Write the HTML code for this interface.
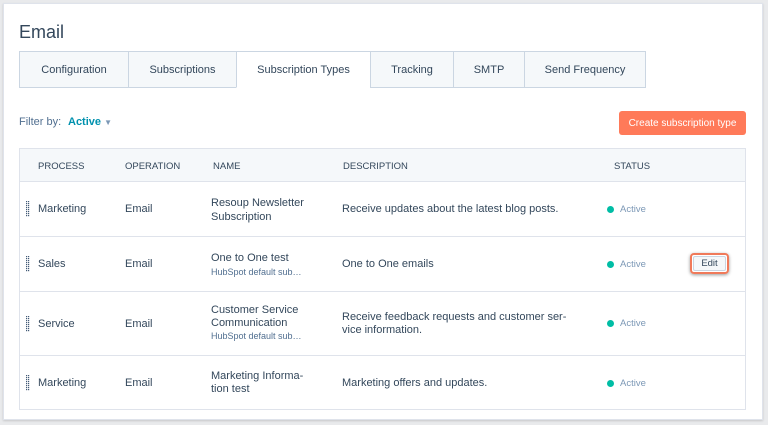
<!DOCTYPE html>
<html><head><style>
*{margin:0;padding:0;box-sizing:border-box}
body{width:768px;height:425px;background:#e9eaec;font-family:"Liberation Sans",sans-serif;color:#33475b;position:relative;overflow:hidden}
.card{position:absolute;left:3px;top:3px;width:760px;height:417px;background:#fff;border:1px solid #dfe3eb;box-shadow:0 1px 2px rgba(0,0,0,.15)}
.abs{position:absolute}
h1{position:absolute;left:19px;top:22px;font-size:18px;font-weight:normal;color:#33475b}
.tab{position:absolute;top:51px;height:37px;background:#f5f8fa;border:1px solid #cbd6e2;font-size:11px;line-height:36px;text-align:center;color:#33475b}
.tab.act{background:#fff;border-bottom-color:#fff}
.t{position:absolute;font-size:11px;color:#33475b}
.btn{position:absolute;left:619px;top:111px;width:127px;height:24px;background:#ff7a59;border-radius:3px;color:#fff;font-size:10px;display:flex;align-items:center;justify-content:center}
.table{position:absolute;left:19px;top:148px;width:727px;height:262px;border:1px solid #dfe3eb}
.hd{position:absolute;left:0;top:0;width:725px;height:33px;background:#f5f8fa;border-bottom:1px solid #dfe3eb}
.row{position:absolute;left:0;width:725px;border-bottom:1px solid #dfe3eb}
.th{position:absolute;top:12px;font-size:9.5px;color:#33475b}
.grip{position:absolute;left:6px}
.dot{position:absolute;width:7px;height:7px;border-radius:50%;background:#00bda5}
.st{position:absolute;font-size:9.5px;color:#7c98b6}
.sub{font-size:9px;color:#516f90}
</style></head><body>
<div class="card"></div>
<h1>Email</h1>
<div class="tab" style="left:19px;width:110px">Configuration</div>
<div class="tab" style="left:128px;width:109px">Subscriptions</div>
<div class="tab act" style="left:236px;width:135px">Subscription Types</div>
<div class="tab" style="left:370px;width:84px">Tracking</div>
<div class="tab" style="left:453px;width:72px">SMTP</div>
<div class="tab" style="left:524px;width:122px">Send Frequency</div>
<div class="t" style="left:19px;top:116px;color:#516f90">Filter by:</div>
<div class="t" style="left:68px;top:116px;color:#0091ae;font-weight:bold">Active <span style="font-size:8px;color:#7c98b6">▼</span></div>
<div class="btn">Create subscription type</div>
<svg width="0" height="0" style="position:absolute"><defs><pattern id="g" width="2" height="2" patternUnits="userSpaceOnUse"><rect width="1.2" height="1.2" fill="#425b76"/></pattern></defs></svg>
<div class="table">
<div class="hd">
<div class="th" style="left:18px">PROCESS</div>
<div class="th" style="left:105px">OPERATION</div>
<div class="th" style="left:193px">NAME</div>
<div class="th" style="left:323px">DESCRIPTION</div>
<div class="th" style="left:594px">STATUS</div>
</div>
<div class="row" style="top:33px;height:55px">
<svg class="grip" style="top:19px" width="4" height="16"><rect width="4" height="16" fill="url(#g)"/></svg>
<div class="t" style="left:18px;top:21px">Marketing</div>
<div class="t" style="left:105px;top:21px">Email</div>
<div class="t" style="left:191px;top:14px;line-height:14px">Resoup Newsletter<br>Subscription</div>
<div class="t" style="left:322px;top:21px">Receive updates about the latest blog posts.</div>
<div class="dot" style="left:587px;top:24px"></div><div class="st" style="left:600px;top:22px">Active</div>
</div>
<div class="row" style="top:88px;height:55px">
<svg class="grip" style="top:19px" width="4" height="16"><rect width="4" height="16" fill="url(#g)"/></svg>
<div class="t" style="left:18px;top:21px">Sales</div>
<div class="t" style="left:105px;top:21px">Email</div>
<div class="t" style="left:191px;top:14px;line-height:14px">One to One test<br><span class="sub">HubSpot default sub…</span></div>
<div class="t" style="left:322px;top:21px">One to One emails</div>
<div class="dot" style="left:587px;top:24px"></div><div class="st" style="left:600px;top:22px">Active</div>
<div class="abs" style="left:670px;top:16px;width:39px;height:21px;border:2px solid #f07a5a;border-radius:4px;box-shadow:0 1px 3px rgba(0,0,0,.4)"><div style="margin:1px;height:15px;border:1px solid #cbd6e2;border-radius:2px;background:#f5f8fa;font-size:9.5px;text-align:center;line-height:13px">Edit</div></div>
</div>
<div class="row" style="top:143px;height:64px">
<svg class="grip" style="top:24px" width="4" height="16"><rect width="4" height="16" fill="url(#g)"/></svg>
<div class="t" style="left:18px;top:26px">Service</div>
<div class="t" style="left:105px;top:26px">Email</div>
<div class="t" style="left:191px;top:12px;line-height:13px">Customer Service<br>Communication<br><span class="sub">HubSpot default sub…</span></div>
<div class="t" style="left:322px;top:19px;line-height:13px">Receive feedback requests and customer ser-<br>vice information.</div>
<div class="dot" style="left:587px;top:28px"></div><div class="st" style="left:600px;top:26px">Active</div>
</div>
<div class="row" style="top:207px;height:54px;border-bottom:none">
<svg class="grip" style="top:19px" width="4" height="16"><rect width="4" height="16" fill="url(#g)"/></svg>
<div class="t" style="left:18px;top:21px">Marketing</div>
<div class="t" style="left:105px;top:21px">Email</div>
<div class="t" style="left:191px;top:14px;line-height:13px">Marketing Informa-<br>tion test</div>
<div class="t" style="left:322px;top:21px">Marketing offers and updates.</div>
<div class="dot" style="left:587px;top:24px"></div><div class="st" style="left:600px;top:22px">Active</div>
</div>
</div>
</body></html>
